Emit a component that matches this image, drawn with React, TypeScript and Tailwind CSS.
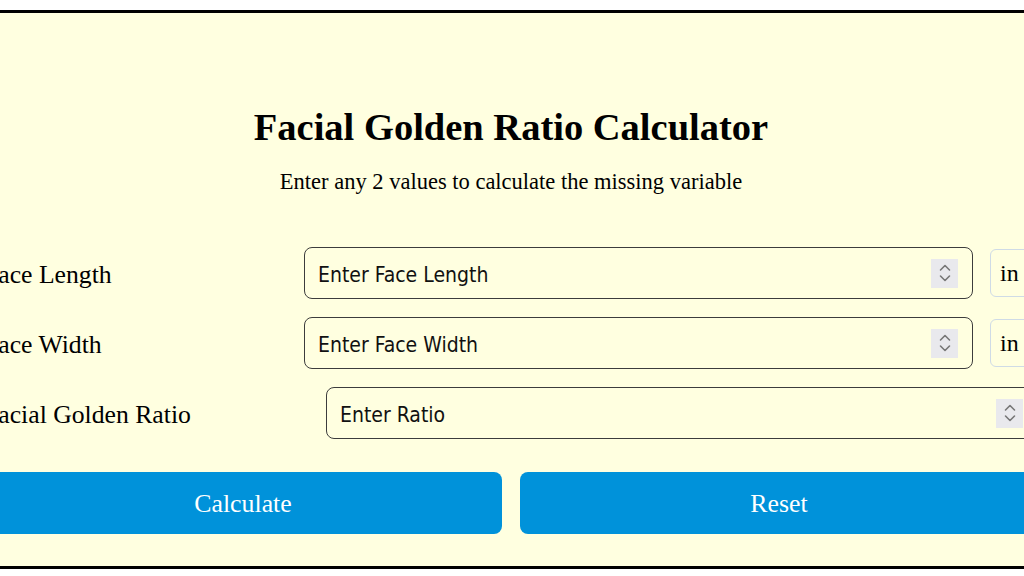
import React from "react";

const serif = { fontFamily: '"Liberation Serif", "Times New Roman", serif' };

function Spinner() {
  return (
    <div className="w-[27px] h-[29px] bg-[#e9e9ed] flex items-center justify-center shrink-0">
      <svg width="14" height="24" viewBox="0 0 14 24" fill="none" stroke="#777" strokeWidth="1.6" strokeLinecap="round" strokeLinejoin="round">
        <path d="M2.5 9 L7 4.5 L11.5 9" />
        <path d="M2.5 15 L7 19.5 L11.5 15" />
      </svg>
    </div>
  );
}

function NumberBox({ placeholder, width }: { placeholder: string; width: string }) {
  return (
    <div className={`${width} h-[52px] shrink-0 border border-[#3c3c3c] rounded-[8px] flex items-center justify-between pl-[13px] pr-[14px]`}>
      <span
        className="mt-[6px] text-[21px] text-[#111] font-stretch-condensed"
        style={{ fontFamily: '"DejaVu Sans Condensed", "DejaVu Sans", sans-serif' }}
      >
        {placeholder}
      </span>
      <Spinner />
    </div>
  );
}

function Unit() {
  return (
    <div className="ml-[17px] w-[48px] h-[48px] shrink-0 border border-[#cfdbe6] rounded-[6px] flex items-center pl-[9px] text-[24px] text-black" style={serif}>
      in
    </div>
  );
}

export default function App() {
  return (
    <div className="w-[1024px] h-[576px] bg-white overflow-hidden flex justify-center pt-[10px]">
      <div className="shrink-0 w-[1100px] h-[559px] mr-[2px] border-[3px] border-black bg-[#ffffe0] flex flex-col items-center px-[20px]" style={serif}>
        <h1 className="mt-[91px] text-[38.5px] font-bold text-black leading-[46px]">Facial Golden Ratio Calculator</h1>
        <p className="mt-[19px] text-[22.5px] text-black leading-[26px]">Enter any 2 values to calculate the missing variable</p>
        <div className="mt-[52px] w-[1054px] flex flex-col gap-[18px]">
          <div className="flex items-center">
            <label className="mt-[4px] w-[320px] shrink-0 text-[25.7px] text-black">Face Length</label>
            <NumberBox placeholder="Enter Face Length" width="w-[669px]" />
            <Unit />
          </div>
          <div className="flex items-center">
            <label className="mt-[4px] w-[320px] shrink-0 text-[25.7px] text-black">Face Width</label>
            <NumberBox placeholder="Enter Face Width" width="w-[669px]" />
            <Unit />
          </div>
          <div className="flex items-center">
            <label className="mt-[4px] w-[342px] shrink-0 text-[25.7px] text-black">Facial Golden Ratio</label>
            <NumberBox placeholder="Enter Ratio" width="w-[712px]" />
          </div>
        </div>
        <div className="mt-[33px] w-[1054px] flex gap-[18px]">
          <button className="flex-1 h-[62px] rounded-[8px] bg-[#0092da] text-white text-[25.8px] pt-[2px]" style={serif}>Calculate</button>
          <button className="flex-1 h-[62px] rounded-[8px] bg-[#0092da] text-white text-[25.8px] pt-[2px]" style={serif}>Reset</button>
        </div>
      </div>
    </div>
  );
}
